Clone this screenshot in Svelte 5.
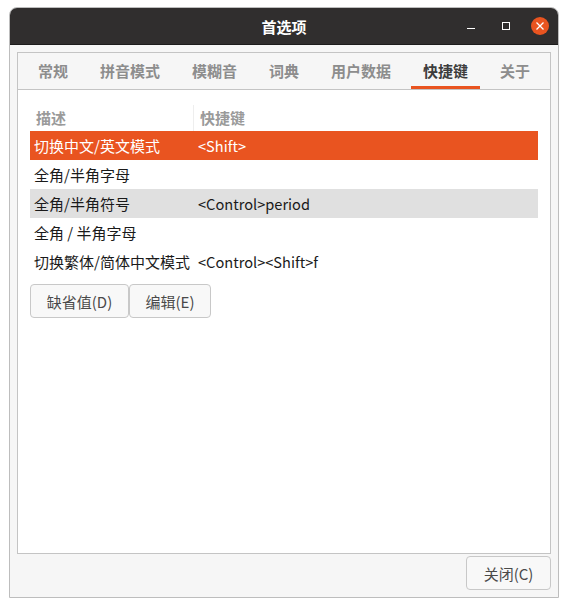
<script>
  const tabs = ['常规', '拼音模式', '模糊音', '词典', '用户数据', '快捷键', '关于'];
  const rows = [
    { d: '切换中文/英文模式', k: '<Shift>', c: 'sel' },
    { d: '全角/半角字母', k: '', c: '' },
    { d: '全角/半角符号', k: '<Control>period', c: 'alt' },
    { d: '全角 / 半角字母', k: '', c: '' },
    { d: '切换繁体/简体中文模式', k: '<Control><Shift>f', c: '' }
  ];
</script>

<div class="page">
  <div class="window">
    <header class="titlebar">
      <span class="title">首选项</span>
      <div class="controls">
        <svg class="min" width="12" height="12" viewBox="0 0 12 12"><path d="M1 8.5h8" stroke="#fff" stroke-width="1" fill="none"/></svg>
        <svg class="max" width="12" height="12" viewBox="0 0 12 12"><rect x="2.5" y="2.5" width="7" height="7" stroke="#fff" stroke-width="1" fill="none"/></svg>
        <svg width="18" height="18" viewBox="0 0 18 18"><circle cx="9" cy="9" r="9" fill="#e95420"/><path d="M5.5 5.5l7 7M12.5 5.5l-7 7" stroke="#fff" stroke-width="1.3" fill="none"/></svg>
      </div>
    </header>
    <div class="body">
      <div class="notebook">
        <nav class="tabs">
          {#each tabs as t, i}
            <div class="tab" class:active={i === 5}>{t}</div>
          {/each}
        </nav>
        <div class="content">
          <div class="thead">
            <div class="th first">描述</div>
            <div class="th">快捷键</div>
          </div>
          {#each rows as r}
            <div class="row {r.c}">
              <div class="desc">{r.d}</div>
              <div class="key">{r.k}</div>
            </div>
          {/each}
          <div class="btns">
            <button class="btn b1">缺省值(D)</button>
            <button class="btn b2">编辑(E)</button>
          </div>
        </div>
      </div>
      <div class="footer">
        <button class="btn close">关闭(C)</button>
      </div>
    </div>
  </div>
</div>

<style>
  :global(body) { margin: 0; background: #fff; }
  .page {
    width: 568px; height: 606px; box-sizing: border-box; padding: 7px 9px 8px 9px;
    font-family: "Noto Sans CJK SC", "Noto Sans", sans-serif; font-size: 15px;
  }
  .window {
    height: 591px; box-sizing: border-box; border: 1px solid #bdbdbd; border-radius: 8px 8px 0 0;
    background: #f6f6f6; display: flex; flex-direction: column; overflow: hidden;
  }
  .titlebar {
    height: 37px; flex: none; box-sizing: border-box; padding-top: 1px; background: #302e2e; color: #fff; position: relative;
    display: flex; align-items: center; justify-content: center; border-bottom: 1px solid #1d1c1c;
  }
  .title { font-size: 15px; font-weight: 700; line-height: 20px; }
  .controls {
    position: absolute; right: 9px; top: 9px; display: flex; align-items: center;
  }
  .min { margin-right: 22px; }
  .max { margin-right: 19px; }
  .body { flex: 1; display: flex; flex-direction: column; padding: 7px; min-height: 0; }
  .notebook {
    flex: 1; border: 1px solid #c4c4c4; background: #fff; display: flex; flex-direction: column; min-height: 0;
  }
  .tabs {
    height: 36px; flex: none; background: #f6f6f6; border-bottom: 1px solid #c4c4c4;
    display: flex; padding-left: 4px;
  }
  .tab {
    padding: 0 16px; color: #8d8d8d; font-weight: 700; font-size: 15px; line-height: 36px;
    height: 36px; box-sizing: border-box; white-space: nowrap;
  }
  .tab.active { color: #3d3d3d; box-shadow: inset 0 -3px 0 #e95420; padding: 0 12px; margin: 0 4px; }
  .content { flex: 1; padding: 15px 12px 0 12px; }
  .thead { display: flex; height: 26px; }
  .th { color: #9a9a9a; font-weight: 700; font-size: 15px; line-height: 26px; padding-left: 6px; }
  .th.first { width: 157px; border-right: 1px solid #eee; }
  .row { display: flex; height: 29px; align-items: center; color: #1a1a1a; font-size: 15px; }
  .row.sel { background: #e95420; color: #fff; }
  .row.alt { background: #e0e0e0; }
  .desc { width: 168px; padding-left: 4px; white-space: nowrap; box-sizing: border-box; }
  .key { font-size: 14.6px; white-space: pre; }
  .btns { display: flex; margin-top: 8px; }
  .btn {
    height: 34px; box-sizing: border-box; border: 1px solid #c8c8c8; border-radius: 4px;
    background: #f8f8f8; color: #4a4a4a; font: inherit; font-size: 15px; padding: 0;
  }
  .b1 { width: 99px; }
  .b2 { width: 82px; }
  .footer { height: 36px; flex: none; display: flex; justify-content: flex-end; align-items: flex-end; }
  .close { width: 85px; }
</style>
